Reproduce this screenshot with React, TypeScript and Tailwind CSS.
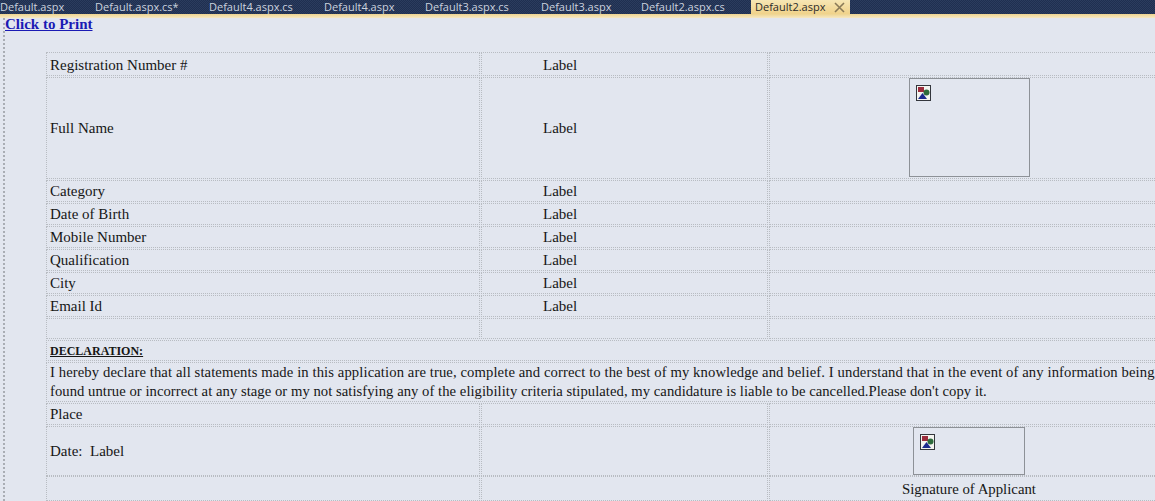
import React from 'react';

const tabs = [
  { name: 'Default.aspx', w: 'w-[95px]' },
  { name: 'Default.aspx.cs*', w: 'w-[114px]' },
  { name: 'Default4.aspx.cs', w: 'w-[115px]' },
  { name: 'Default4.aspx', w: 'w-[101px]' },
  { name: 'Default3.aspx.cs', w: 'w-[116px]' },
  { name: 'Default3.aspx', w: 'w-[100px]' },
  { name: 'Default2.aspx.cs', w: 'w-[110px]' },
];

const fields = ['Category', 'Date of Birth', 'Mobile Number', 'Qualification', 'City', 'Email Id'];

const cell = 'border border-dotted border-[#b8bcc2] flex items-center min-w-0';
const label = 'pl-[61px]';

const BrokenImage = () => (
  <svg width="15" height="16" viewBox="0 0 15 16" className="block">
    <rect x="0.5" y="0.5" width="14" height="15" fill="#f4f4f0" stroke="#33363c" />
    <rect x="2" y="2" width="6" height="5" fill="#9c2c3c" />
    <circle cx="10.5" cy="7.5" r="3" fill="#2e6b3c" />
    <path d="M2 14 L6.5 8 L11 14 Z" fill="#1c2a8e" />
  </svg>
);

const Row = ({ h, a, b, pad = '', children }: { h: string; a?: React.ReactNode; b?: string; pad?: string; children?: React.ReactNode }) => (
  <div className={`grid grid-cols-[434px_287px_400px] gap-x-px mb-px ${h}`}>
    <div className={`${cell} pl-[3px] ${pad}`}>{a}</div>
    <div className={`${cell} ${label} ${pad}`}>{b}</div>
    <div className={`${cell} justify-center ${pad}`}>{children}</div>
  </div>
);

export default function App() {
  return (
    <div className="w-[1155px] h-[501px] overflow-hidden bg-[#e2e6ef] text-[#161616] font-['Liberation_Serif',serif] text-[15px] leading-[17px]">
      {/* document tab well */}
      <div className="h-[14px] bg-[repeating-conic-gradient(#1f2f50_0_25%,#2b3c5e_0_50%)] bg-[length:2px_2px] flex items-stretch font-['Open_Sans',sans-serif] text-[11px] leading-[14px] text-[#ccd3df] whitespace-nowrap">
        {tabs.map(t => (
          <div key={t.name} className={`${t.w} shrink-0`}>{t.name}</div>
        ))}
        <div className="w-[99px] shrink-0 pl-[4px] flex items-center bg-gradient-to-b from-[#f7e6b4] to-[#f0d28a] text-[#2a2a2a]">
          <span>Default2.aspx</span>
          <svg width="11" height="11" viewBox="0 0 11 11" className="ml-[9px]">
            <path d="M1 1 L10 10 M10 1 L1 10" stroke="#8a7a58" strokeWidth="1.6" fill="none" />
          </svg>
        </div>
      </div>
      <div className="h-[4px] bg-gradient-to-b from-[#eed48f] to-[#f6e8c4]" />

      {/* design surface */}
      <div className="h-[483px] ml-[3px] border-l-2 border-dotted border-[#a9adb4]">
        <a className="block h-[34px] text-[15px] leading-[13px] font-bold text-[#1a1ab4] underline">Click to Print</a>

        <div className="ml-[41px] w-[1123px]">
          <Row h="h-[24px]" pad="pt-[3px]" a="Registration Number #" b="Label" />
          <Row h="h-[102px]" a="Full Name" b="Label">
            <div className="self-start w-[121px] h-[99px] border border-[#8d9197] pl-[6px] pt-[6px]">
              <BrokenImage />
            </div>
          </Row>
          {fields.map(f => (
            <Row key={f} h="h-[22px]" pad="pt-px" a={f} b="Label" />
          ))}
          <Row h="h-[21px]" />

          <div className={`${cell} h-[21px] mb-px pl-[3px] pt-px font-bold text-[12px] underline`}>DECLARATION:</div>
          <div className={`${cell} h-[40px] mb-px pl-[3px] whitespace-nowrap !items-start text-[14.67px] leading-[19px]`}>
            <p>
              <span className="tracking-[0.1px]">I hereby declare that all statements made in this application are true, complete and correct to the best of my knowledge and belief. I understand that in the event of any information being</span>
              <br />
              <span className="tracking-[0.04px]">found untrue or incorrect at any stage or my not satisfying any of the eligibility criteria stipulated, my candidature is liable to be cancelled.Please don't copy it.</span>
            </p>
          </div>
          <Row h="h-[22px]" pad="pt-px" a="Place" />
          <Row h="h-[49px]" a={<span className="pt-px">Date:&nbsp; Label</span>}>
            <div className="self-start w-[112px] h-[48px] border border-[#8d9197] pl-[6px] pt-[6px]">
              <BrokenImage />
            </div>
          </Row>
          <Row h="h-[25px]" pad="pt-[2px]">
            <span className="text-[14.8px]">Signature of Applicant</span>
          </Row>
        </div>
      </div>
    </div>
  );
}
